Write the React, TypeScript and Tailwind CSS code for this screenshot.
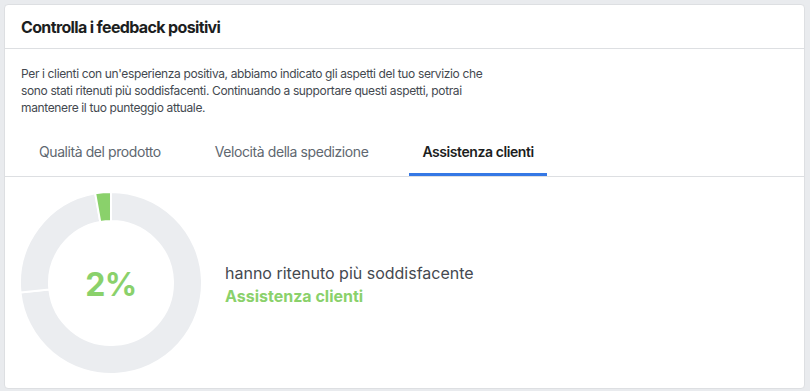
import React from "react";

const GRAY = "#ebedf0";
const GREEN = "#8ad16b";

function arcPath(start: number, end: number, rOut: number, rIn: number, c: number) {
  const rad = (d: number) => (d * Math.PI) / 180;
  const pt = (r: number, d: number) => [c + r * Math.sin(rad(d)), c - r * Math.cos(rad(d))];
  const large = end - start > 180 ? 1 : 0;
  const [x1, y1] = pt(rOut, start);
  const [x2, y2] = pt(rOut, end);
  const [x3, y3] = pt(rIn, end);
  const [x4, y4] = pt(rIn, start);
  return `M${x1} ${y1} A${rOut} ${rOut} 0 ${large} 1 ${x2} ${y2} L${x3} ${y3} A${rIn} ${rIn} 0 ${large} 0 ${x4} ${y4} Z`;
}

function Donut({ value }: { value: string }) {
  const size = 184;
  const c = size / 2;
  // segmenti: due grigi + quello verde in cima
  const segs = [
    { from: 0, to: 264, color: GRAY },
    { from: 264, to: 350, color: GRAY },
    { from: 350, to: 360, color: GREEN },
  ];
  return (
    <div className="relative w-[184px] h-[184px] shrink-0">
      <svg width={size} height={size} viewBox={`0 0 ${size} ${size}`}>
        {segs.map((s, i) => (
          <path
            key={i}
            d={arcPath(s.from, s.to, 91, 62, c)}
            fill={s.color}
            stroke="#ffffff"
            strokeWidth={2}
          />
        ))}
      </svg>
      <div className="absolute inset-0 flex items-center justify-center pt-[4px]">
        <span className="text-[32px] font-bold text-[#8ad16b] leading-none tracking-[-0.02em]">{value}</span>
      </div>
    </div>
  );
}

export default function App() {
  const tabs = ["Qualità del prodotto", "Velocità della spedizione", "Assistenza clienti"];
  const active = 2;
  return (
    <div
      className="h-[391px] bg-[#e9ebee] pt-[4px] pl-[4px] pr-[5px] pb-[2px]"
      style={{ fontFamily: "Inter, 'Liberation Sans', sans-serif" }}
    >
      <div className="bg-white border border-[#dddfe2] rounded-[4px] h-[385px] flex flex-col">
        <div className="h-[44px] px-4 flex items-center border-b border-[#dddfe2]">
          <h2 className="text-[16px] font-bold text-[#1c1e21] tracking-[-0.04em]">Controlla i feedback positivi</h2>
        </div>
        <div className="px-4 pt-[16px]">
          <p className="text-[12px] leading-[17px] text-[#444950] tracking-[-0.03em]">
            Per i clienti con un'esperienza positiva, abbiamo indicato gli aspetti del tuo servizio che
            <br />
            sono stati ritenuti più soddisfacenti. Continuando a supportare questi aspetti, potrai
            <br />
            mantenere il tuo punteggio attuale.
          </p>
        </div>
        <div className="mt-[12px] border-b border-[#dddfe2] pl-[21px] flex gap-[28px]">
          {tabs.map((t, i) => (
            <div
              key={t}
              className={`h-[48px] px-[13px] flex items-center pt-[1px] border-b-[3px] text-[14px] tracking-[-0.03em] ${
                i === active
                  ? "border-[#3578e5] font-semibold text-[#1c1e21]"
                  : "border-transparent text-[#606770]"
              }`}
            >
              {t}
            </div>
          ))}
        </div>
        <div className="flex items-center pl-[14px] pt-[14px]">
          <Donut value="2%" />
          <div className="ml-[22px] mt-[4px]">
            <div className="text-[16px] leading-[23px] text-[#444950]">hanno ritenuto più soddisfacente</div>
            <div className="text-[16px] leading-[23px] font-bold text-[#8ad16b]">Assistenza clienti</div>
          </div>
        </div>
      </div>
    </div>
  );
}
